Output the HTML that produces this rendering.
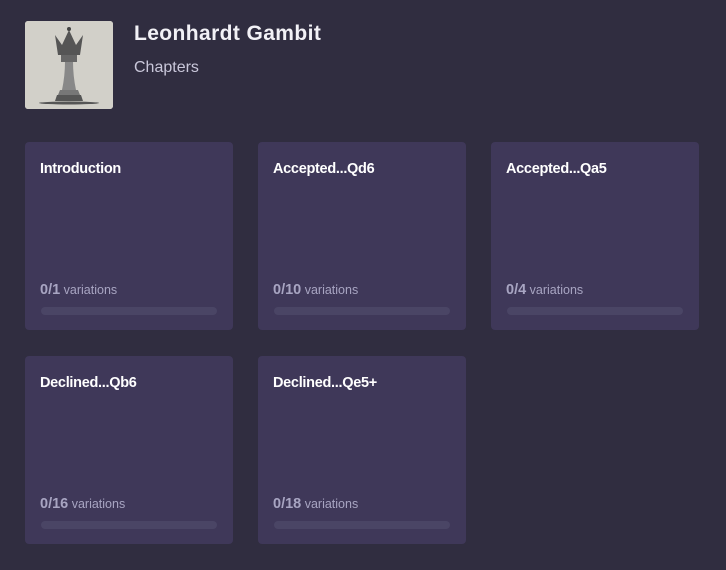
<!DOCTYPE html><html><head><style>
body{margin:0;width:726px;height:570px;background:#302d40;font-family:"Liberation Sans",sans-serif;position:relative;overflow:hidden}
.img{position:absolute;left:25px;top:21px;width:88px;height:88px;background:#cfcdc6;border-radius:3px;overflow:hidden}
h1{position:absolute;left:134px;top:22px;margin:0;font-size:21px;font-weight:bold;color:#f2f1f6;letter-spacing:0.4px}
.sub{position:absolute;left:134px;top:59px;font-size:16px;color:#c9c7da}
.card{position:absolute;width:208px;height:188px;background:#3f3859;border-radius:4px}
.card .t{position:absolute;left:15px;top:19px;font-size:14.5px;font-weight:bold;color:#fff;letter-spacing:-0.3px}
.card .v{position:absolute;left:15px;top:140px;font-size:12.5px;color:#a8a5c2}
.card .v b{font-size:14.5px;font-weight:bold}
.card .bar{position:absolute;left:16px;top:165px;width:176px;height:8px;border-radius:4px;background:#4a4565}
</style></head><body>
<div class="img"><svg width="88" height="88" viewBox="0 0 88 88">
<rect width="88" height="88" fill="#d2d0c9"/>
<ellipse cx="44" cy="82" rx="30" ry="1.5" fill="#555"/>
<path d="M30 80 h28 l-2 -6 h-24z" fill="#555"/>
<path d="M33 74 h22 l-2 -5 h-18z" fill="#777"/>
<path d="M37 69 Q40 55 40 40 h8 Q48 55 51 69z" fill="#888"/>
<rect x="36" y="34" width="16" height="7" fill="#666"/>
<path d="M33 34 l-3 -20 l7 10 l7 -15 l7 15 l7 -10 l-3 20z" fill="#555"/>
<circle cx="44" cy="8" r="2" fill="#444"/>
</svg></div>
<h1>Leonhardt Gambit</h1>
<div class="sub">Chapters</div>
<div class="card" style="left:25px;top:142px"><div class="t">Introduction</div><div class="v"><b>0/1</b> variations</div><div class="bar"></div></div>
<div class="card" style="left:258px;top:142px"><div class="t">Accepted...Qd6</div><div class="v"><b>0/10</b> variations</div><div class="bar"></div></div>
<div class="card" style="left:491px;top:142px"><div class="t">Accepted...Qa5</div><div class="v"><b>0/4</b> variations</div><div class="bar"></div></div>
<div class="card" style="left:25px;top:356px"><div class="t">Declined...Qb6</div><div class="v"><b>0/16</b> variations</div><div class="bar"></div></div>
<div class="card" style="left:258px;top:356px"><div class="t">Declined...Qe5+</div><div class="v"><b>0/18</b> variations</div><div class="bar"></div></div>
</body></html>
